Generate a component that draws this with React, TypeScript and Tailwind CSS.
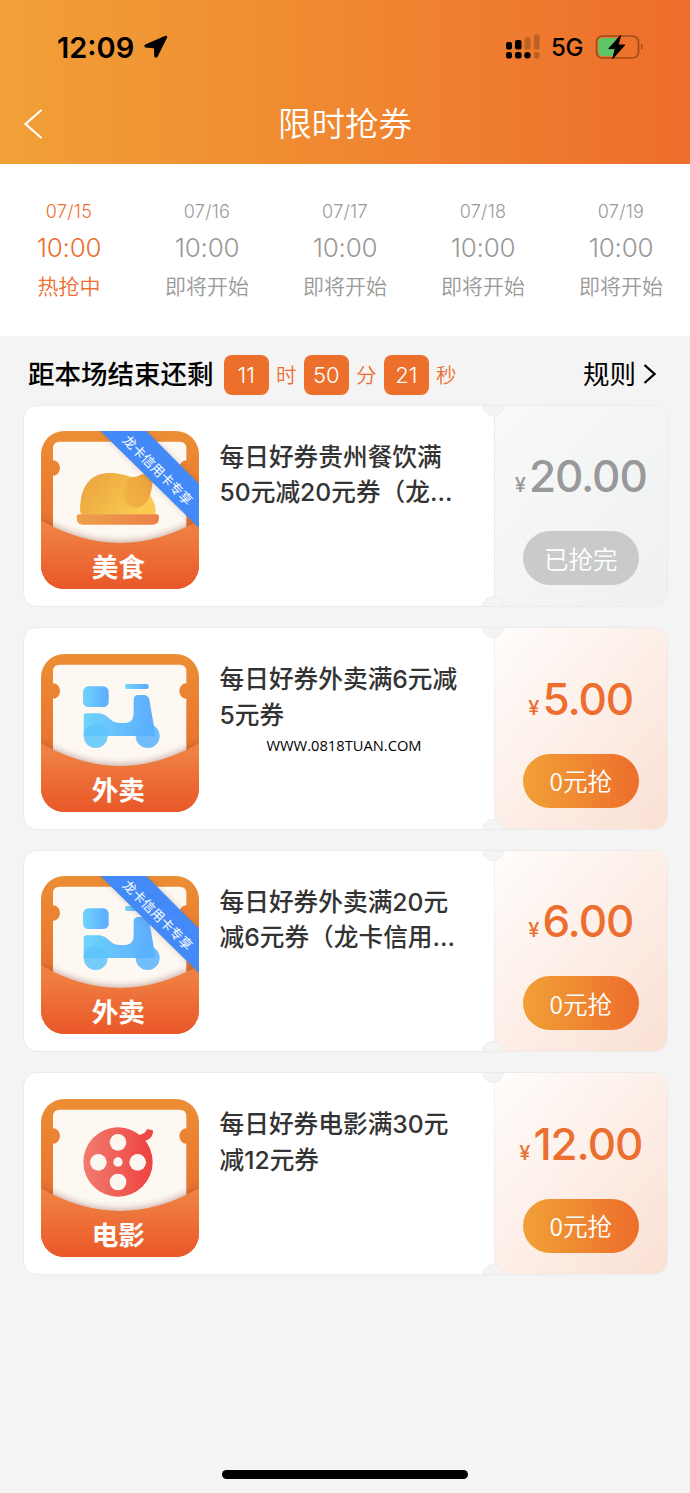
import { clsx } from "clsx";
import type { ReactNode } from "react";

type Kind = "food" | "delivery" | "movie";

type Coupon = {
  readonly id: number;
  readonly kind: Kind;
  readonly label: string;
  readonly lines: readonly [string, string];
  readonly price: string;
  readonly cardOnly?: boolean;
  readonly soldOut?: boolean;
  readonly watermark?: string;
};

const SESSIONS = [
  { date: "07/15", time: "10:00", status: "热抢中", active: true },
  { date: "07/16", time: "10:00", status: "即将开始", active: false },
  { date: "07/17", time: "10:00", status: "即将开始", active: false },
  { date: "07/18", time: "10:00", status: "即将开始", active: false },
  { date: "07/19", time: "10:00", status: "即将开始", active: false },
];

const COUPONS: readonly Coupon[] = [
  {
    id: 1,
    kind: "food",
    label: "美食",
    lines: ["每日好券贵州餐饮满", "50元减20元券（龙..."],
    price: "20.00",
    cardOnly: true,
    soldOut: true,
  },
  {
    id: 2,
    kind: "delivery",
    label: "外卖",
    lines: ["每日好券外卖满6元减", "5元券"],
    price: "5.00",
    watermark: "WWW.0818TUAN.COM",
  },
  {
    id: 3,
    kind: "delivery",
    label: "外卖",
    lines: ["每日好券外卖满20元", "减6元券（龙卡信用..."],
    price: "6.00",
    cardOnly: true,
  },
  {
    id: 4,
    kind: "movie",
    label: "电影",
    lines: ["每日好券电影满30元", "减12元券"],
    price: "12.00",
  },
];

function StatusBar() {
  return (
    <div className="flex h-[94px] items-center pl-[57px] pr-[46px] text-black">
      <span className="w-[78px] whitespace-nowrap text-[29px] font-semibold leading-none">12:09</span>
      <svg className="ml-[9px] h-[24px] w-[24px]" viewBox="0 0 24 24" aria-hidden="true">
        <path
          d="M22 2 12.300 21.300 11.600 21.300 11.200 12.200 1.800 11.200 1.800 10.600Z"
          fill="currentColor"
          stroke="currentColor"
          strokeWidth="2.600"
          strokeLinejoin="round"
        />
      </svg>
      <svg className="ml-auto h-[26px] w-[36px]" viewBox="0 0 36 26" aria-hidden="true">
        <g fill="#000">
          <rect x="1" y="8" width="6" height="7.500" rx="2" />
          <rect x="10" y="6" width="6.500" height="9.500" rx="2" />
          <rect x="1" y="18" width="6" height="6.500" rx="2.200" />
          <rect x="10" y="18" width="6.500" height="6.500" rx="2.200" />
          <circle cx="22.500" cy="21.300" r="3.200" />
        </g>
        <g fill="#000" opacity="0.2">
          <rect x="19.500" y="3.500" width="6" height="12" rx="1.500" />
          <rect x="29" y="0.500" width="5.500" height="15" rx="1.500" />
          <rect x="29" y="18" width="5.500" height="6.500" rx="1.500" />
        </g>
      </svg>
      <span className="ml-[10px] w-[34px] pt-px text-[24px] font-medium leading-[26px] tracking-[-0.3px]">5G</span>
      <svg className="ml-[10px] h-[26px] w-[49px]" viewBox="0 0 49 26" aria-hidden="true">
        <rect x="1.500" y="2" width="42" height="22" rx="6" fill="none" stroke="#9a4c18" strokeWidth="1.700" />
        <path d="M46 9.500c2 .7 2 5.800 0 6.500Z" fill="#9a4c18" />
        <path d="M7 4h14v18H7a3.500 3.500 0 0 1-3.500-3.500v-11A3.500 3.500 0 0 1 7 4Z" fill="#5cc566" />
        <path
          d="M25.500 1.500 13.800 14.600h6.500l-2.600 10L29.800 11h-6.600Z"
          fill="#000"
          stroke="#000"
          strokeWidth="1"
          strokeLinejoin="round"
        />
      </svg>
    </div>
  );
}

function Header() {
  return (
    <header className="h-[164px] bg-linear-to-r from-[#f1a037] to-[#ed6d2b]">
      <StatusBar />
      <div className="grid h-[60px] grid-cols-[60px_1fr_60px] items-center text-white">
        <svg className="ml-[23px] h-[32px] w-[20px]" viewBox="0 0 20 32" aria-hidden="true">
          <path d="M18.500 2 2.500 16l16 14" fill="none" stroke="#fff" strokeWidth="2.200" />
        </svg>
        <h1 className="text-center text-[33.500px] font-[350] leading-[60px]">限时抢券</h1>
      </div>
    </header>
  );
}

function SessionTabs() {
  return (
    <nav className="grid h-[172px] grid-cols-5 bg-white pt-[34px]">
      {SESSIONS.map((s) => (
        <div
          key={s.date}
          className={clsx("flex flex-col items-center", s.active ? "text-[#ec6f30]" : "text-[#999]")}
        >
          <span className="text-[18px] font-[350] leading-[27px] tracking-[0.3px]">{s.date}</span>
          <span className="mt-[3px] text-[26px] font-[350] leading-[40px] tracking-[-0.200px]">{s.time}</span>
          <span className="mt-[4px] whitespace-nowrap text-[21px] font-[350] leading-[30px]">{s.status}</span>
        </div>
      ))}
    </nav>
  );
}

function TimeBox({ value, unit }: { readonly value: string; readonly unit: string }) {
  return (
    <>
      <span className="flex h-[40px] w-[44.500px] items-center justify-center rounded-[8px] bg-[#ec6f2c] text-[22px] font-light text-white">
        {value}
      </span>
      <span className="w-[35.500px] text-center text-[20.500px] font-[350] leading-[41px] text-[#ec6f30]">{unit}</span>
    </>
  );
}

function Countdown() {
  return (
    <div className="flex h-[68.500px] items-start pl-[28px] pr-[34px] pt-[19px] text-black">
      <span className="w-[196px] text-[26.500px] font-medium leading-[38px]">距本场结束还剩</span>
      <TimeBox value="11" unit="时" />
      <TimeBox value="50" unit="分" />
      <TimeBox value="21" unit="秒" />
      <span className="ml-auto text-[26.500px] leading-[38px]">规则</span>
      <svg className="ml-[7px] mt-[9px] h-[20px] w-[13px]" viewBox="0 0 13 20" aria-hidden="true">
        <path d="m1.500 1 10 9-10 9" fill="none" stroke="#000" strokeWidth="2.300" />
      </svg>
    </div>
  );
}

function Chicken() {
  return (
    <g>
      <path
        d="M124 251Q117 247 117 240C118 198 124 172 146 148c18-18 44-24 70-22 26 1 40 10 62 12h34c14 20 12 42 18 60 12 18 16 36 12 53Z"
        fill="url(#chicken)"
      />
      <path
        d="M256 148c12-10 28-8 42-16 14-6 34-2 36 14 2 14-2 32-8 48-8 24-26 38-48 36-22-2-32-20-30-42 1-16 8-26 8-40Z"
        fill="url(#leg)"
      />
      <path d="M107 257q0-7 7-7h233q7 0 7 7v4q0 20-20 20H127q-20 0-20-20Z" fill="url(#plate)" />
    </g>
  );
}

function Scooter() {
  return (
    <g>
      <rect x="126" y="97" width="77" height="62" rx="16" fill="url(#sky)" />
      <rect x="252" y="90" width="71" height="15" rx="6" fill="url(#sky)" />
      <path
        d="M128 186q0-8 8-8h34c34 0 34 29 66 29h14c22 0 28-12 28-32v-38q0-14 14-14h16q14 0 17 14l19 109H128Z"
        fill="url(#sky)"
      />
      <circle cx="164" cy="246" r="36" fill="#5cc4fa" opacity="0.85" />
      <circle cx="320" cy="246" r="36" fill="#58b3fd" opacity="0.85" />
    </g>
  );
}

function FilmReel() {
  return (
    <g>
      <path d="M286 108c16 0 28-6 32-18l18 4c1 20-12 30-32 34Z" fill="#ee4a44" />
      <circle cx="231" cy="189" r="104" fill="url(#reel)" />
      <g fill="#fdf7f2">
        <circle cx="231" cy="130" r="25" />
        <circle cx="172" cy="190" r="25" />
        <circle cx="290" cy="190" r="25" />
        <circle cx="231" cy="249" r="25" />
        <circle cx="231" cy="189" r="14" />
      </g>
    </g>
  );
}

const ART: Record<Kind, ReactNode> = {
  food: <Chicken />,
  delivery: <Scooter />,
  movie: <FilmReel />,
};

/** Gradients shared by every coupon icon. */
function IconDefs() {
  return (
    <svg className="absolute h-0 w-0" aria-hidden="true">
      <defs>
        <linearGradient id="frame" x1="0" y1="0" x2="0" y2="1">
          <stop offset="0" stopColor="#ec8e35" />
          <stop offset="0.6" stopColor="#e9732d" />
        </linearGradient>
        <linearGradient id="pocket" x1="0" y1="0" x2="0" y2="1">
          <stop offset="0" stopColor="#f08646" />
          <stop offset="1" stopColor="#ea5728" />
        </linearGradient>
        <linearGradient id="chicken" x1="0" y1="0" x2="1" y2="0.500">
          <stop offset="0" stopColor="#eaa03e" />
          <stop offset="1" stopColor="#f9cb4e" />
        </linearGradient>
        <linearGradient id="leg" x1="1" y1="0" x2="0" y2="0.800">
          <stop offset="0" stopColor="#eba03c" />
          <stop offset="1" stopColor="#f3b444" />
        </linearGradient>
        <linearGradient id="plate">
          <stop offset="0" stopColor="#eda04c" />
          <stop offset="1" stopColor="#ec8048" />
        </linearGradient>
        <linearGradient id="sky">
          <stop offset="0" stopColor="#6fd3fb" />
          <stop offset="1" stopColor="#5cacff" />
        </linearGradient>
        <linearGradient id="reel">
          <stop offset="0" stopColor="#f17c6e" />
          <stop offset="1" stopColor="#ee423f" />
        </linearGradient>
        <clipPath id="tile">
          <rect width="474" height="474" rx="70" />
        </clipPath>
        <filter id="soft" x="-20%" y="-20%" width="140%" height="140%">
          <feGaussianBlur stdDeviation="9" />
        </filter>
      </defs>
    </svg>
  );
}

function CouponIcon({ kind, label, ribbon }: { readonly kind: Kind; readonly label: string; readonly ribbon?: boolean }) {
  return (
    <svg className="h-[158px] w-[158px] shrink-0 overflow-visible" viewBox="0 0 474 474">
      <g clipPath="url(#tile)">
        <rect width="474" height="474" fill="url(#frame)" />
        <path
          d="M36 52q0-20 20-20h360q20 0 20 20v36a21 23 0 1 0 0 46v230H36V134a21 23 0 1 0 0-46Z"
          fill="#fdf8f2"
        />
        {ART[kind]}
        <path d="M0 262Q237 398 474 262V474H0Z" fill="#8a4a3c" opacity="0.4" filter="url(#soft)" />
        <path d="M0 268Q237 404 474 268V474H0Z" fill="url(#pocket)" />
        {ribbon ? (
          <>
            <path d="M178 0h138l158 158v133Z" fill="#7a4a30" opacity="0.25" filter="url(#soft)" />
            <path d="M178 0h138l158 158v133Z" fill="#4389f7" />
          </>
        ) : null}
      </g>
      <text
        x="232"
        y="437"
        textAnchor="middle"
        className="fill-white font-['Noto_Sans_CJK_SC',sans-serif] text-[80px] font-bold"
      >
        {label}
      </text>
      {ribbon ? (
        <text
          x="0"
          y="14"
          textAnchor="middle"
          transform="translate(350 118) rotate(45)"
          className="fill-white font-['Noto_Sans_CJK_SC',sans-serif] text-[39.500px]"
        >
          龙卡信用卡专享
        </text>
      ) : null}
    </svg>
  );
}

function Notch({ className }: { readonly className: string }) {
  return (
    <span
      className={clsx("absolute left-[458px] h-[22px] w-[22px] rounded-full border border-[#ececec] bg-[#f4f4f4]", className)}
    />
  );
}

function CouponCard({ coupon }: { readonly coupon: Coupon }) {
  const { soldOut = false } = coupon;
  return (
    <li className="relative flex h-[202.500px] overflow-hidden rounded-[14px] border border-[#ebebeb] bg-white">
      <div className="flex w-[470px] pl-[17px] pt-[25.500px]">
        <CouponIcon kind={coupon.kind} label={coupon.label} ribbon={coupon.cardOnly} />
        <div className="ml-[21px] mt-[8.500px] whitespace-nowrap text-[24.700px] font-medium leading-[35.500px] text-[#333]">
          <p>{coupon.lines[0]}</p>
          <p>{coupon.lines[1]}</p>
        </div>
      </div>
      <div
        className={clsx(
          "flex flex-1 flex-col items-center border-l border-dashed",
          soldOut
            ? "border-[#e6e8e8] bg-linear-to-br from-[#f8f9f9] to-[#eff1f1]"
            : "border-[#f6ece7] bg-linear-to-br from-[#fffdfc] to-[#fae0d3]",
        )}
      >
        <div className={clsx("mt-[44.500px] flex h-[52px] items-baseline", soldOut ? "text-[#999]" : "text-[#ec6f30]")}>
          <span className="mr-[3px] text-[20px] font-medium">¥</span>
          <span className="text-[44px] font-medium leading-[52px] tracking-[-1.100px]">{coupon.price}</span>
        </div>
        <button
          type="button"
          className={clsx(
            "mt-[29px] h-[54px] w-[116px] rounded-full font-['Noto_Sans_CJK_SC',sans-serif] text-[24.500px] font-[350] leading-[53px] text-white",
            soldOut ? "bg-[#c9caca]" : "bg-linear-to-r from-[#f0a037] to-[#ed6d2b]",
          )}
        >
          {soldOut ? "已抢完" : "0元抢"}
        </button>
      </div>
      <Notch className="-top-[12px]" />
      <Notch className="-bottom-[12px]" />
      {coupon.watermark ? (
        <span className="absolute left-[243px] top-[106px] font-['Open_Sans',sans-serif] text-[14.700px] leading-[22px] text-black">
          {coupon.watermark}
        </span>
      ) : null}
    </li>
  );
}

export default function App() {
  return (
    <div className="flex h-[1493px] w-[690px] flex-col overflow-hidden bg-[#f4f4f4] font-['Inter','Noto_Sans_CJK_SC',sans-serif]">
      <IconDefs />
      <Header />
      <SessionTabs />
      <Countdown />
      <ul className="flex flex-col gap-[20px] pl-[22.500px] pr-[22px]">
        {COUPONS.map((coupon) => (
          <CouponCard key={coupon.id} coupon={coupon} />
        ))}
      </ul>
      <div className="mx-auto mb-[14px] mt-auto h-[9px] w-[246px] rounded-full bg-black" />
    </div>
  );
}
